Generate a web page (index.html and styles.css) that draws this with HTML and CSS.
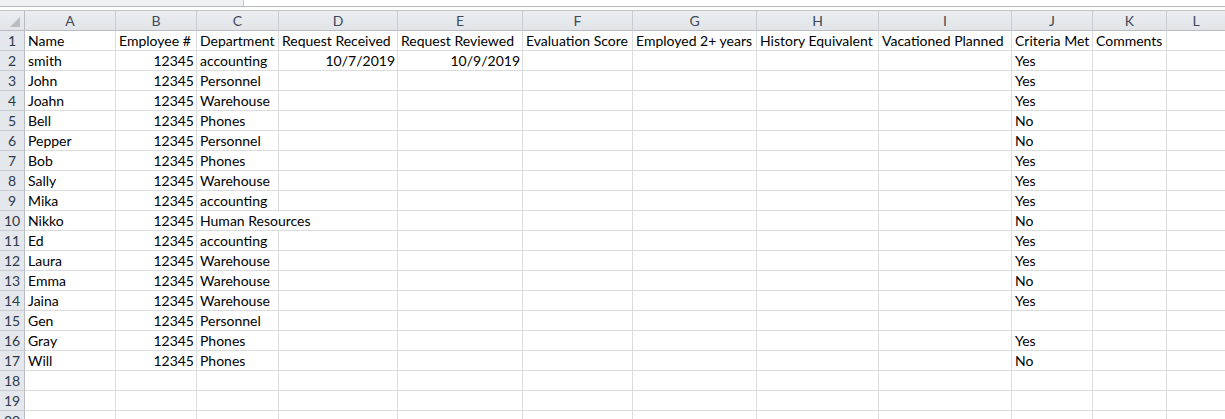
FILE: index.html
```html
<!DOCTYPE html>
<html>
<head>
<meta charset="utf-8">
<link rel="stylesheet" href="styles.css">
</head>
<body>
<div class="topbar">
  <div class="namebox"></div>
  <div class="formula"></div>
</div>
<div class="gap"></div>
<div class="sheet">
  <div class="row hdr">
    <div class="corner"><svg width="10" height="10" viewBox="0 0 10 10"><polygon points="10,0 10,10 0,10" fill="#b9bcc1"/></svg></div>
    <div class="ch">A</div><div class="ch">B</div><div class="ch">C</div><div class="ch">D</div><div class="ch">E</div><div class="ch">F</div><div class="ch">G</div><div class="ch">H</div><div class="ch">I</div><div class="ch">J</div><div class="ch">K</div><div class="ch">L</div>
  </div>
  <div class="row"><div class="rh">1</div><div class="c">Name</div><div class="c">Employee #</div><div class="c">Department</div><div class="c">Request Received</div><div class="c">Request Reviewed</div><div class="c">Evaluation Score</div><div class="c">Employed 2+ years</div><div class="c">History Equivalent</div><div class="c">Vacationed Planned</div><div class="c">Criteria Met</div><div class="c">Comments</div><div class="c"></div></div>
  <div class="row"><div class="rh">2</div><div class="c">smith</div><div class="c n">12345</div><div class="c">accounting</div><div class="c n">10/7/2019</div><div class="c n">10/9/2019</div><div class="c"></div><div class="c"></div><div class="c"></div><div class="c"></div><div class="c">Yes</div><div class="c"></div><div class="c"></div></div>
  <div class="row"><div class="rh">3</div><div class="c">John</div><div class="c n">12345</div><div class="c">Personnel</div><div class="c"></div><div class="c"></div><div class="c"></div><div class="c"></div><div class="c"></div><div class="c"></div><div class="c">Yes</div><div class="c"></div><div class="c"></div></div>
  <div class="row"><div class="rh">4</div><div class="c">Joahn</div><div class="c n">12345</div><div class="c">Warehouse</div><div class="c"></div><div class="c"></div><div class="c"></div><div class="c"></div><div class="c"></div><div class="c"></div><div class="c">Yes</div><div class="c"></div><div class="c"></div></div>
  <div class="row"><div class="rh">5</div><div class="c">Bell</div><div class="c n">12345</div><div class="c">Phones</div><div class="c"></div><div class="c"></div><div class="c"></div><div class="c"></div><div class="c"></div><div class="c"></div><div class="c">No</div><div class="c"></div><div class="c"></div></div>
  <div class="row"><div class="rh">6</div><div class="c">Pepper</div><div class="c n">12345</div><div class="c">Personnel</div><div class="c"></div><div class="c"></div><div class="c"></div><div class="c"></div><div class="c"></div><div class="c"></div><div class="c">No</div><div class="c"></div><div class="c"></div></div>
  <div class="row"><div class="rh">7</div><div class="c">Bob</div><div class="c n">12345</div><div class="c">Phones</div><div class="c"></div><div class="c"></div><div class="c"></div><div class="c"></div><div class="c"></div><div class="c"></div><div class="c">Yes</div><div class="c"></div><div class="c"></div></div>
  <div class="row"><div class="rh">8</div><div class="c">Sally</div><div class="c n">12345</div><div class="c">Warehouse</div><div class="c"></div><div class="c"></div><div class="c"></div><div class="c"></div><div class="c"></div><div class="c"></div><div class="c">Yes</div><div class="c"></div><div class="c"></div></div>
  <div class="row"><div class="rh">9</div><div class="c">Mika</div><div class="c n">12345</div><div class="c">accounting</div><div class="c"></div><div class="c"></div><div class="c"></div><div class="c"></div><div class="c"></div><div class="c"></div><div class="c">Yes</div><div class="c"></div><div class="c"></div></div>
  <div class="row"><div class="rh">10</div><div class="c">Nikko</div><div class="c n">12345</div><div class="c over">Human Resources</div><div class="c"></div><div class="c"></div><div class="c"></div><div class="c"></div><div class="c"></div><div class="c">No</div><div class="c"></div><div class="c"></div></div>
  <div class="row"><div class="rh">11</div><div class="c">Ed</div><div class="c n">12345</div><div class="c">accounting</div><div class="c"></div><div class="c"></div><div class="c"></div><div class="c"></div><div class="c"></div><div class="c"></div><div class="c">Yes</div><div class="c"></div><div class="c"></div></div>
  <div class="row"><div class="rh">12</div><div class="c">Laura</div><div class="c n">12345</div><div class="c">Warehouse</div><div class="c"></div><div class="c"></div><div class="c"></div><div class="c"></div><div class="c"></div><div class="c"></div><div class="c">Yes</div><div class="c"></div><div class="c"></div></div>
  <div class="row"><div class="rh">13</div><div class="c">Emma</div><div class="c n">12345</div><div class="c">Warehouse</div><div class="c"></div><div class="c"></div><div class="c"></div><div class="c"></div><div class="c"></div><div class="c"></div><div class="c">No</div><div class="c"></div><div class="c"></div></div>
  <div class="row"><div class="rh">14</div><div class="c">Jaina</div><div class="c n">12345</div><div class="c">Warehouse</div><div class="c"></div><div class="c"></div><div class="c"></div><div class="c"></div><div class="c"></div><div class="c"></div><div class="c">Yes</div><div class="c"></div><div class="c"></div></div>
  <div class="row"><div class="rh">15</div><div class="c">Gen</div><div class="c n">12345</div><div class="c">Personnel</div><div class="c"></div><div class="c"></div><div class="c"></div><div class="c"></div><div class="c"></div><div class="c"></div><div class="c"></div><div class="c"></div><div class="c"></div></div>
  <div class="row"><div class="rh">16</div><div class="c">Gray</div><div class="c n">12345</div><div class="c">Phones</div><div class="c"></div><div class="c"></div><div class="c"></div><div class="c"></div><div class="c"></div><div class="c"></div><div class="c">Yes</div><div class="c"></div><div class="c"></div></div>
  <div class="row"><div class="rh">17</div><div class="c">Will</div><div class="c n">12345</div><div class="c">Phones</div><div class="c"></div><div class="c"></div><div class="c"></div><div class="c"></div><div class="c"></div><div class="c"></div><div class="c">No</div><div class="c"></div><div class="c"></div></div>
  <div class="row"><div class="rh">18</div><div class="c"></div><div class="c"></div><div class="c"></div><div class="c"></div><div class="c"></div><div class="c"></div><div class="c"></div><div class="c"></div><div class="c"></div><div class="c"></div><div class="c"></div><div class="c"></div></div>
  <div class="row"><div class="rh">19</div><div class="c"></div><div class="c"></div><div class="c"></div><div class="c"></div><div class="c"></div><div class="c"></div><div class="c"></div><div class="c"></div><div class="c"></div><div class="c"></div><div class="c"></div><div class="c"></div></div>
  <div class="row"><div class="rh">20</div><div class="c"></div><div class="c"></div><div class="c"></div><div class="c"></div><div class="c"></div><div class="c"></div><div class="c"></div><div class="c"></div><div class="c"></div><div class="c"></div><div class="c"></div><div class="c"></div></div>
</div>
</body>
</html>
```

FILE: styles.css
```css
html, body {
  margin: 0;
  padding: 0;
  background: #ffffff;
  overflow: hidden;
  width: 1225px;
  height: 419px;
}

body {
  font-family: "Lato", "Open Sans", "Liberation Sans", sans-serif;
  font-size: 14px;
  color: #000000;
}

.topbar {
  display: flex;
  height: 6px;
  border-bottom: 1px solid #b5b9be;
}

.namebox {
  width: 243px;
  background: #eef0f3;
  border-right: 1px solid #c4c8cd;
}

.formula {
  flex: 1;
  background: #ffffff;
}

.gap {
  height: 3px;
  background: #ffffff;
}

.sheet {
  width: 1225px;
}

.row {
  display: grid;
  grid-template-columns: 25px 91px 81px 82px 119px 125px 110px 124px 122px 133px 81px 74px 1fr;
  height: 20px;
}

.row > div {
  box-sizing: border-box;
  border-right: 1px solid #dadcdd;
  border-bottom: 1px solid #dadcdd;
  height: 20px;
  line-height: 19px;
  white-space: nowrap;
  overflow: hidden;
}

.row > div:last-child {
  border-right: none;
}

.hdr {
  height: 21px;
}

.hdr > div {
  height: 21px;
  line-height: 20px;
  border-top: 1px solid #c0c4c9;
  border-right: 1px solid #c9ccd1;
  border-bottom: 1px solid #b9bdc3;
  background: linear-gradient(#eceef1, #e1e4e8);
  color: #3f4a5a;
  text-align: center;
  padding: 0;
}

.hdr > .corner {
  position: relative;
  border-right: 1px solid #b9bdc3;
}

.corner svg {
  position: absolute;
  right: 4px;
  bottom: 3px;
}

.row > .rh {
  background: #e4e7eb;
  color: #2e3a4a;
  text-align: center;
  border-right: 1px solid #b9bdc3;
  border-bottom: 1px solid #c9ccd1;
}

.c {
  padding: 0 2px 0 3px;
}

.c.n {
  text-align: right;
}

.c.over {
  overflow: visible;
  grid-column: span 2;
  border-right: 1px solid #dadcdd;
}
```
